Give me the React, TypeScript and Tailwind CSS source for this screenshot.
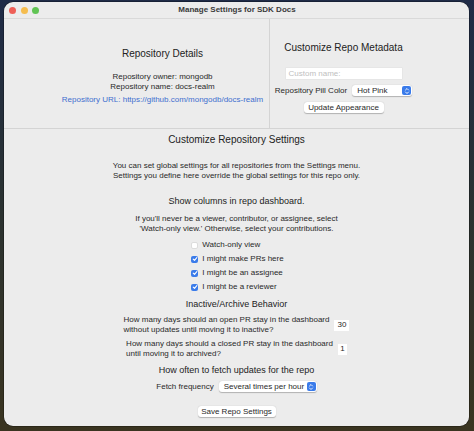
import React from "react";

const font = { fontFamily: '"Liberation Sans", Arial, sans-serif' };

function Check({ checked }: { checked: boolean }) {
  if (!checked) {
    return <span className="inline-block w-[7px] h-[7px] rounded-[2px] bg-white border border-[#dcdcdc] shrink-0" />;
  }
  return (
    <span className="inline-flex w-[7px] h-[7px] rounded-[2px] bg-[#3a7bea] items-center justify-center shrink-0">
      <svg width="6" height="6" viewBox="0 0 10 10">
        <path d="M2 5.3 L4.2 7.4 L8 2.6" fill="none" stroke="white" strokeWidth="1.8" strokeLinecap="round" strokeLinejoin="round" />
      </svg>
    </span>
  );
}

function Stepper() {
  return (
    <span className="inline-flex w-[9px] h-[9px] rounded-[2px] bg-[#3a7bea] items-center justify-center shrink-0">
      <svg width="6" height="8" viewBox="0 0 6 8">
        <path d="M1.5 3 L3 1.5 L4.5 3" fill="none" stroke="white" strokeWidth="0.9" strokeLinecap="round" strokeLinejoin="round" />
        <path d="M1.5 5 L3 6.5 L4.5 5" fill="none" stroke="white" strokeWidth="0.9" strokeLinecap="round" strokeLinejoin="round" />
      </svg>
    </span>
  );
}

function CheckRow({ checked, label }: { checked: boolean; label: string }) {
  return (
    <div className="h-[14px] flex items-center gap-[4px]">
      <Check checked={checked} />
      <span>{label}</span>
    </div>
  );
}

export default function App() {
  return (
    <div
      className="w-[474px] h-[431px] overflow-hidden pt-[2px] pl-[4px] bg-linear-to-b from-[#1f2b47] via-[#2b3230] to-[#3a3420]"
      style={font}
    >
      <div className="w-[465px] h-[424px] rounded-[9px] bg-[#ececec] overflow-hidden flex flex-col text-[8px] leading-[10px] text-[#292929] shadow-[0_0_0_0.5px_rgba(0,0,0,0.5)]">
        {/* Title bar */}
        <div className="h-[17px] shrink-0 flex items-center border-b border-[#d9d9d9]">
          <div className="flex items-center gap-[4.5px] pl-[5px]">
            <span className="w-[7px] h-[7px] rounded-full bg-[#ee5f57]" />
            <span className="w-[7px] h-[7px] rounded-full bg-[#f5bd4f]" />
            <span className="w-[7px] h-[7px] rounded-full bg-[#61c454]" />
          </div>
          <div className="flex-1 text-center font-bold text-[8px] text-[#3a3a3a] pr-[38px] pl-[4px]">
            Manage Settings for SDK Docs
          </div>
        </div>

        {/* Top section */}
        <div className="h-[110px] shrink-0 flex border-b border-[#d4d4d4]">
          <div className="w-[266px] border-r border-[#d4d4d4] flex flex-col items-center pl-[52px] pr-[0px] pt-[29px]">
            <div className="text-[10px] leading-[12px] text-[#222]">Repository Details</div>
            <div className="mt-[12px]">Repository owner: mongodb</div>
            <div>Repository name: docs-realm</div>
            <div className="mt-[3px] text-[#3f6fcf] whitespace-nowrap">Repository URL: https://github.com/mongodb/docs-realm</div>
          </div>
          <div className="flex-1 flex flex-col items-center pr-[52px] pt-[23px]">
            <div className="text-[10px] leading-[12px] text-[#222]">Customize Repo Metadata</div>
            <div className="mt-[14px] w-[116px] h-[11px] bg-white flex items-center pl-[3px] text-[#c0c0c0] shadow-[0_0_0_0.5px_#e0e0e0]">
              Custom name:
            </div>
            <div className="mt-[6px] flex items-center gap-[5px]">
              <span>Repository Pill Color</span>
              <div className="w-[60px] h-[11px] bg-white rounded-[3px] flex items-center justify-between pl-[5px] pr-[1px] shadow-[0_0.5px_1px_rgba(0,0,0,0.25)]">
                <span>Hot Pink</span>
                <Stepper />
              </div>
            </div>
            <div className="mt-[6px] w-[80px] h-[11px] bg-white rounded-[3px] flex items-center justify-center shadow-[0_0.5px_1px_rgba(0,0,0,0.25)]">
              Update Appearance
            </div>
          </div>
        </div>

        {/* Bottom section */}
        <div className="flex-1 flex flex-col items-center pt-[5px]">
          <div className="text-[10px] leading-[12px] text-[#222]">Customize Repository Settings</div>
          <div className="mt-[15px] text-center">
            You can set global settings for all repositories from the Settings menu.
            <br />
            Settings you define here override the global settings for this repo only.
          </div>
          <div className="mt-[14px] text-[9px] leading-[12px] text-[#222]">Show columns in repo dashboard.</div>
          <div className="mt-[7px] text-center">
            If you&apos;ll never be a viewer, contributor, or assignee, select
            <br />
            &apos;Watch-only view.&apos; Otherwise, select your contributions.
          </div>
          <div className="mt-[4px] flex flex-col items-start pl-[2px]">
            <CheckRow checked={false} label="Watch-only view" />
            <CheckRow checked={true} label="I might make PRs here" />
            <CheckRow checked={true} label="I might be an assignee" />
            <CheckRow checked={true} label="I might be a reviewer" />
          </div>
          <div className="mt-[4px] text-[9px] leading-[12px] text-[#222]">Inactive/Archive Behavior</div>
          <div className="mt-[5px] flex items-center gap-[5px]">
            <div>
              How many days should an open PR stay in the dashboard
              <br />
              without updates until moving it to inactive?
            </div>
            <div className="w-[15px] h-[11px] bg-white flex items-center justify-center">30</div>
          </div>
          <div className="mt-[4px] flex items-center gap-[5px]">
            <div>
              How many days should a closed PR stay in the dashboard
              <br />
              until moving it to archived?
            </div>
            <div className="w-[9px] h-[11px] bg-white flex items-center justify-center">1</div>
          </div>
          <div className="mt-[5px] text-[9px] leading-[12px] text-[#222]">How often to fetch updates for the repo</div>
          <div className="mt-[5px] flex items-center gap-[5px]">
            <span>Fetch frequency</span>
            <div className="w-[98px] h-[11px] bg-white rounded-[3px] flex items-center justify-between pl-[5px] pr-[1px] shadow-[0_0.5px_1px_rgba(0,0,0,0.25)]">
              <span>Several times per hour</span>
              <Stepper />
            </div>
          </div>
          <div className="mt-[14px] w-[78px] h-[11px] bg-white rounded-[3px] flex items-center justify-center shadow-[0_0.5px_1px_rgba(0,0,0,0.25)]">
            Save Repo Settings
          </div>
        </div>
      </div>
    </div>
  );
}
